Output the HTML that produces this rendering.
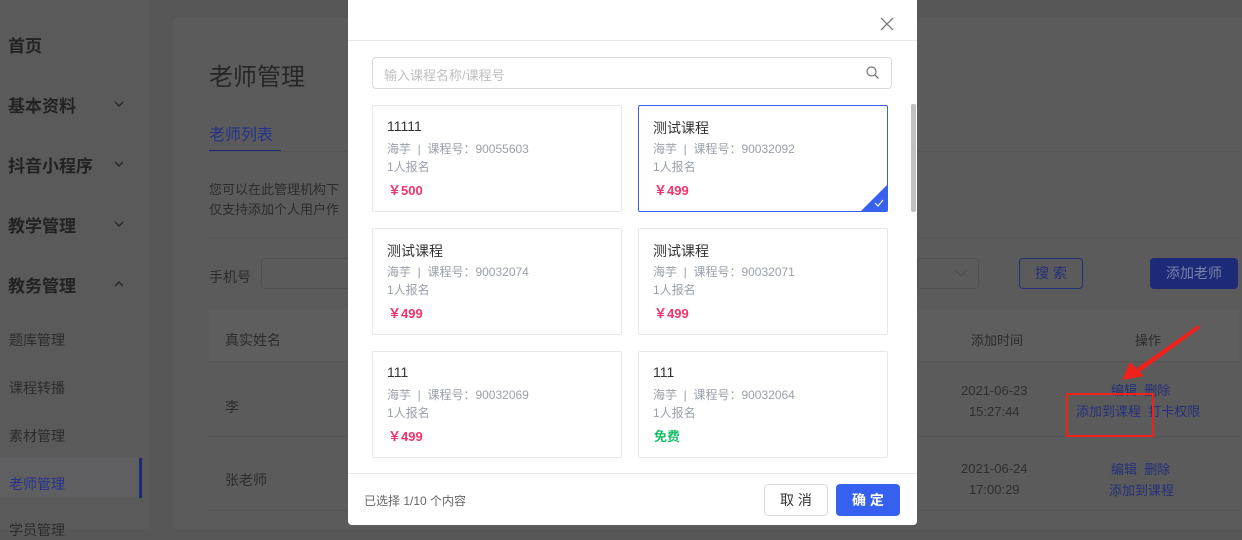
<!DOCTYPE html>
<html><head><meta charset="utf-8"><style>
*{margin:0;padding:0;box-sizing:border-box}
body{width:1242px;height:529px;overflow:hidden;background:#575757;font-family:"Liberation Sans","Noto Sans CJK SC",sans-serif;position:relative}
.a{position:absolute;white-space:nowrap}
.side{left:0;top:0;width:150px;height:529px;background:#5a5a5a}
.main{left:173px;top:18px;width:1069px;height:511px;background:#5b5b5b}
.nav{font-size:17px;font-weight:bold;color:#222}
.sub{font-size:14px;color:#2c2c2c}
.dk{color:#2c2c2c}
.card{position:absolute;width:250px;height:107px;background:#fff;border:1px solid #e8e8e8;border-radius:2px}
.card .t{position:absolute;left:14px;top:12px;font-size:14px;color:#333}
.card .m{position:absolute;left:14px;top:34px;font-size:12px;color:#9aa0ab;line-height:18px}
.card .p{position:absolute;left:15px;top:74px;font-size:13px;font-weight:bold;color:#f5336b}
.lk{color:#25307a;font-size:13px}
</style></head><body>
<div class="a side"></div>
<div class="a nav" style="left:8px;top:32px">首页</div>
<div class="a nav" style="left:8px;top:92px">基本资料</div>
<div class="a nav" style="left:8px;top:152px">抖音小程序</div>
<div class="a nav" style="left:8px;top:212px">教学管理</div>
<div class="a nav" style="left:8px;top:272px">教务管理</div>
<svg class="a" style="left:114px;top:100px" width="10" height="8"><polyline points="1,2 5,6 9,2" fill="none" stroke="#2a2a2a" stroke-width="1.5"/></svg>
<svg class="a" style="left:114px;top:160px" width="10" height="8"><polyline points="1,2 5,6 9,2" fill="none" stroke="#2a2a2a" stroke-width="1.5"/></svg>
<svg class="a" style="left:114px;top:220px" width="10" height="8"><polyline points="1,2 5,6 9,2" fill="none" stroke="#2a2a2a" stroke-width="1.5"/></svg>
<svg class="a" style="left:114px;top:280px" width="10" height="8"><polyline points="1,6 5,2 9,6" fill="none" stroke="#2a2a2a" stroke-width="1.5"/></svg>
<div class="a sub" style="left:9px;top:330px">题库管理</div>
<div class="a sub" style="left:9px;top:378px">课程转播</div>
<div class="a sub" style="left:9px;top:426px">素材管理</div>
<div class="a" style="left:0;top:458px;width:142px;height:40px;background:#5f5f62"></div>
<div class="a" style="left:139px;top:458px;width:3px;height:40px;background:#1c2a78"></div>
<div class="a sub" style="left:9px;top:474px;color:#26328a">老师管理</div>
<div class="a sub" style="left:9px;top:520px">学员管理</div>

<div class="a main"></div>
<div class="a" style="left:209px;top:57px;font-size:24px;color:#262626">老师管理</div>
<div class="a" style="left:209px;top:121px;font-size:16px;color:#26328a">老师列表</div>
<div class="a" style="left:209px;top:150px;width:72px;height:2px;background:#1c2a78"></div>
<div class="a" style="left:209px;top:151px;width:1030px;height:1px;background:#555"></div>
<div class="a dk" style="left:209px;top:180px;font-size:13px;line-height:20px">您可以在此管理机构下<br>仅支持添加个人用户作</div>
<div class="a" style="left:209px;top:237px;width:1030px;height:1px;background:#555"></div>
<div class="a dk" style="left:209px;top:267px;font-size:14px">手机号</div>
<div class="a" style="left:261px;top:258px;width:100px;height:31px;border:1px solid #505050;border-radius:4px"></div>
<div class="a" style="left:917px;top:258px;width:62px;height:31px;border:1px solid #505050;border-radius:4px"></div>
<svg class="a" style="left:955px;top:270px" width="12" height="8"><polyline points="1,1 6,6 11,1" fill="none" stroke="#4a4a4a" stroke-width="1"/></svg>
<div class="a" style="left:1019px;top:258px;width:64px;height:31px;border:1px solid #25307a;border-radius:4px;color:#25307a;font-size:14px;text-align:center;line-height:29px">搜 索</div>
<div class="a" style="left:1150px;top:258px;width:88px;height:31px;background:#1c2a78;border-radius:4px;color:#7a80a8;font-size:14px;text-align:center;line-height:31px">添加老师</div>
<div class="a" style="left:209px;top:310px;width:1030px;height:52px;background:#5e5e5e;border-bottom:1px solid #555"></div>
<div class="a dk" style="left:225px;top:330px;font-size:14px">真实姓名</div>
<div class="a dk" style="left:971px;top:330px;font-size:13px">添加时间</div>
<div class="a dk" style="left:1135px;top:330px;font-size:13px">操作</div>
<div class="a dk" style="left:225px;top:397px;font-size:14px">李</div>
<div class="a" style="left:209px;top:436px;width:1030px;height:1px;background:#555"></div>
<div class="a dk" style="left:225px;top:470px;font-size:14px">张老师</div>
<div class="a" style="left:209px;top:510px;width:1030px;height:1px;background:#555"></div>
<div class="a dk" style="left:961px;top:380px;font-size:13px;line-height:21px;text-align:center;color:#2f2f2f">2021-06-23<br>15:27:44</div>
<div class="a dk" style="left:961px;top:458px;font-size:13px;line-height:21px;text-align:center;color:#2f2f2f">2021-06-24<br>17:00:29</div>
<div class="a lk" style="left:1111px;top:380px">编辑 &nbsp;删除</div>
<div class="a lk" style="left:1076px;top:401px">添加到课程 &nbsp;打卡权限</div>
<div class="a lk" style="left:1111px;top:459px">编辑 &nbsp;删除</div>
<div class="a lk" style="left:1109px;top:480px">添加到课程</div>
<div class="a" style="left:1066px;top:393px;width:88px;height:44px;border:2px solid #f0201a"></div>
<svg class="a" style="left:1110px;top:320px" width="100" height="70"><polygon points="88,5 90,8 30,52 27,48" fill="#f0201a"/><polygon points="12,60 20,42 34,56" fill="#f0201a"/></svg>

<div class="a" style="left:348px;top:0;width:569px;height:525px;background:#fff;border-radius:0 0 4px 4px;overflow:hidden">
<svg class="a" style="left:532px;top:17px" width="14" height="14"><path d="M1 1L13 13M13 1L1 13" stroke="#777" stroke-width="1.3"/></svg>
<div class="a" style="left:0;top:40px;width:569px;height:1px;background:#e8e8e8"></div>
<div class="a" style="left:24px;top:57px;width:520px;height:32px;border:1px solid #d9d9d9;border-radius:4px"></div>
<div class="a" style="left:36px;top:65px;font-size:13px;color:#bfbfbf">输入课程名称/课程号</div>
<svg class="a" style="left:517px;top:65px" width="16" height="16"><circle cx="6.5" cy="6.5" r="4.5" fill="none" stroke="#777" stroke-width="1.2"/><line x1="10" y1="10" x2="13.5" y2="13.5" stroke="#777" stroke-width="1.3"/></svg>
<div class="card" style="left:24px;top:105px"><div class="t">11111</div><div class="m">海芋 &nbsp;| &nbsp;课程号：90055603<br>1人报名</div><div class="p">￥500</div></div>
<div class="card" style="left:290px;top:105px;border-color:#3560f0;overflow:hidden"><div class="t">测试课程</div><div class="m">海芋 &nbsp;| &nbsp;课程号：90032092<br>1人报名</div><div class="p">￥499</div>
<div style="position:absolute;right:0;bottom:0;width:0;height:0;border-left:26px solid transparent;border-bottom:26px solid #3560f0"></div>
<svg style="position:absolute;right:3px;bottom:4px" width="10" height="8"><polyline points="1,4 4,7 9,1" fill="none" stroke="#fff" stroke-width="1.2"/></svg></div>
<div class="card" style="left:24px;top:228px"><div class="t">测试课程</div><div class="m">海芋 &nbsp;| &nbsp;课程号：90032074<br>1人报名</div><div class="p">￥499</div></div>
<div class="card" style="left:290px;top:228px"><div class="t">测试课程</div><div class="m">海芋 &nbsp;| &nbsp;课程号：90032071<br>1人报名</div><div class="p">￥499</div></div>
<div class="card" style="left:24px;top:351px"><div class="t">111</div><div class="m">海芋 &nbsp;| &nbsp;课程号：90032069<br>1人报名</div><div class="p">￥499</div></div>
<div class="card" style="left:290px;top:351px"><div class="t">111</div><div class="m">海芋 &nbsp;| &nbsp;课程号：90032064<br>1人报名</div><div class="p" style="color:#19be6b">免费</div></div>
<div class="a" style="left:563px;top:104px;width:5px;height:108px;background:#c1c1c1;border-radius:2px"></div>
<div class="a" style="left:0;top:473px;width:569px;height:52px;background:#fff;border-top:1px solid #e8e8e8"></div>
<div class="a" style="left:16px;top:492px;font-size:12px;color:#666">已选择 1/10 个内容</div>
<div class="a" style="left:416px;top:484px;width:64px;height:32px;border:1px solid #d9d9d9;border-radius:4px;font-size:14px;color:#333;text-align:center;line-height:30px">取 消</div>
<div class="a" style="left:488px;top:484px;width:64px;height:32px;background:#3560f0;border-radius:4px;font-size:14px;color:#fff;text-align:center;line-height:32px;font-weight:bold">确 定</div>
</div>
</body></html>
